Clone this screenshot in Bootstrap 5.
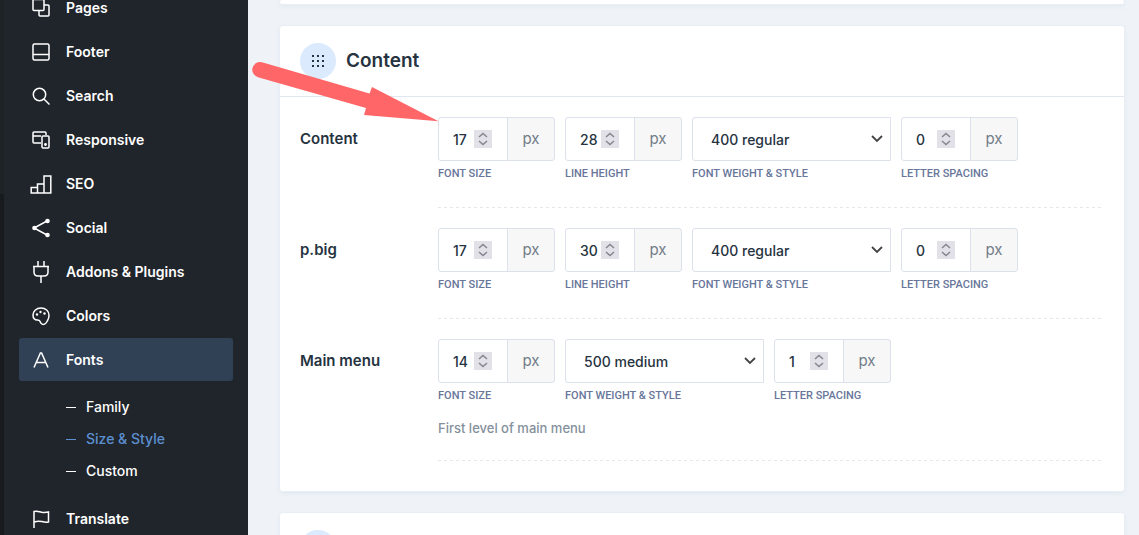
<!DOCTYPE html>
<html lang="en">
<head>
<meta charset="utf-8">
<meta name="viewport" content="width=device-width, initial-scale=1">
<title>Fonts – Size &amp; Style</title>
<link href="https://cdn.jsdelivr.net/npm/bootstrap@5.3.0/dist/css/bootstrap.min.css" rel="stylesheet">
<style>
  body { font-family: Inter, "Open Sans", sans-serif; font-size: 14px; font-weight: 500; line-height: 20px; color: #263340; background: #eff3f8; }
  .app-shell { height: 100vh; }
  .edge-strip { width: 4px; background: linear-gradient(#1e2326 194px, #171b1d 194px); }
  .side-panel { width: 244px; background: #20252b; }
  .side-menu { margin: -14px 15px 0; }
  .side-link { height: 44px; gap: 13px; padding-left: 10px; border-radius: 3px; color: #fff; font-weight: 600; text-decoration: none; }
  .side-link svg { width: 24px; height: 24px; fill: none; stroke: #fff; stroke-width: 1.5; }
  .side-link.current { background: #304156; height: 43px; }
  .sub-menu { padding: 10px 0 10px 47px; }
  .sub-link { height: 32px; gap: 10px; color: #fff; text-decoration: none; }
  .sub-link::before { content: ""; width: 10px; border-top: 1px solid; }
  .sub-link.current { color: #5c90d2; }
  .content-area { padding: 0 15px 0 32px; gap: 22px; min-width: 0; }
  .panel { flex: none; background: #fff; border-radius: 3px; box-shadow: 0 0 0 1px #e9eef5, 0 2px 5px #dfe5ee; }
  .panel-tail { height: 4px; }
  .panel-head { padding: 17px 20px; gap: 10px; border-bottom: 1px solid #e1e7f1; }
  .panel-head h2 { font-size: 19px; line-height: 24px; font-weight: 600; }
  .head-icon { width: 36px; height: 36px; background: #dbeafd; }
  .panel-body { padding: 0 20px 30px; }
  .setting { padding-top: 20px; }
  .setting-name { width: 138px; flex: none; padding-top: 12px; font-size: 15px; font-weight: 600; }
  .setting-fields { padding-bottom: 26px; background: repeating-linear-gradient(90deg, #e4e7ec 0 3px, transparent 3px 6px) bottom / 100% 1px no-repeat; }
  .field-list { gap: 10px; }
  .size-field { width: 117px; }
  .style-field { width: 199px; }
  .form-control, .form-select, .input-group-text { height: 44px; border-color: #dce1eb; border-radius: 3px; font-size: 14px; font-weight: 500; }
  .form-control, .form-select { color: #263340; }
  .form-control { padding: 0 15px 0 14px; }
  .input-group-text { width: 48px; justify-content: center; padding: 0; color: #717c87; background: #f7f7f7; font-size: 15px; font-weight: 400; }
  .form-select { padding: 0 30px 0 18px; border-radius: 3px 0 0 3px; background-size: 12px 8px; background-position: right 7px center;
    background-image: url("data:image/svg+xml,%3Csvg xmlns='http://www.w3.org/2000/svg' viewBox='0 0 12 8'%3E%3Cpath d='M1 1l5 5 5-5' fill='none' stroke='%23444' stroke-width='1.8'/%3E%3C/svg%3E"); }
  .form-control::-webkit-inner-spin-button { -webkit-appearance: none; width: 18px; height: 18px; opacity: 1; margin: 0;
    background: #e3e1e8 url("data:image/svg+xml,%3Csvg xmlns='http://www.w3.org/2000/svg' viewBox='0 0 18 18'%3E%3Cpath d='M5 7l4-3.6L13 7M5 11l4 3.6 4-3.6' fill='none' stroke='%23878590' stroke-width='1.5'/%3E%3C/svg%3E"); }
  .field-label { display: block; margin-top: 5px; font-family: Roboto, sans-serif; font-size: 11px; line-height: 16px; color: #68769a; text-transform: uppercase; white-space: nowrap; }
  .setting-note { margin: 14px 0 -3px; font-size: 13px; color: #84909c; }
  .pointer-arrow { position: absolute; left: 252px; top: 60px; width: 188px; height: 64px; pointer-events: none; }
</style>
</head>
<body>
<div class="app-shell d-flex position-relative overflow-hidden">
  <div class="edge-strip flex-shrink-0"></div>
  <aside class="side-panel flex-shrink-0">
    <nav class="side-menu d-flex flex-column">
      <a href="#" class="side-link d-flex align-items-center"><svg viewBox="0 0 24 24"><rect x="4" y="3.500" width="11" height="11" rx="1"/><path d="M15 9h4q1 0 1 1v9q0 1-1 1h-8q-1 0-1-1v-4.500"/></svg>Pages</a>
      <a href="#" class="side-link d-flex align-items-center"><svg viewBox="0 0 24 24"><rect x="4" y="4" width="16" height="16" rx="1.500"/><path d="M4 14.500h16"/></svg>Footer</a>
      <a href="#" class="side-link d-flex align-items-center"><svg viewBox="0 0 24 24"><circle cx="10.500" cy="10.500" r="6.200"/><path d="M15 15l5.500 5.500"/></svg>Search</a>
      <a href="#" class="side-link d-flex align-items-center"><svg viewBox="0 0 24 24"><path d="M17 7V5q0-1-1-1H5Q4 4 4 5v9q0 1 1 1h7M4 8h8"/><rect x="13" y="8" width="7" height="12" rx="1"/><circle cx="16.500" cy="16.500" r=".7" fill="#fff"/></svg>Responsive</a>
      <a href="#" class="side-link d-flex align-items-center"><svg viewBox="0 0 24 24"><path d="M2.200 15.500h6.300V21H2.200zM8.500 12H15v9H8.500zM15 4h6.800v17H15z"/></svg>SEO</a>
      <a href="#" class="side-link d-flex align-items-center"><svg viewBox="0 0 24 24"><path d="M18 5L5 12l13 7"/><g fill="#fff" stroke="none"><circle cx="18.500" cy="5" r="2.300"/><circle cx="5.500" cy="12" r="2.300"/><circle cx="18.500" cy="19" r="2.300"/></g></svg>Social</a>
      <a href="#" class="side-link d-flex align-items-center"><svg viewBox="0 0 24 24"><path d="M9 1v6M15 1v6M4 6.500h16M5 6.500V12q0 4 4 4h6q4 0 4-4V6.500M12 16v7"/></svg>Addons &amp; Plugins</a>
      <a href="#" class="side-link d-flex align-items-center"><svg viewBox="0 0 24 24"><path d="M12 4C7 4 4 7.500 4 11c0 3 1.500 5 4.500 5 3 0 2 1.500 3.500 3.300 2.500 2.500 5 .2 6-1.800 1-2 2-3 2-6 0-4.500-3.500-7.500-8-7.500z"/><g fill="#fff" stroke="none"><circle cx="8" cy="10.500" r="1.200"/><circle cx="11.500" cy="8" r="1.200"/><circle cx="15.500" cy="9.500" r="1.200"/></g></svg>Colors</a>
      <a href="#" class="side-link current d-flex align-items-center" aria-current="true"><svg viewBox="0 0 24 24"><path d="M5 19.500L11.400 5h1.200L19 19.500M7.500 14.500h9"/></svg>Fonts</a>
      <div class="sub-menu d-flex flex-column">
        <a href="#" class="sub-link d-flex align-items-center">Family</a>
        <a href="#" class="sub-link current d-flex align-items-center" aria-current="page">Size &amp; Style</a>
        <a href="#" class="sub-link d-flex align-items-center">Custom</a>
      </div>
      <a href="#" class="side-link d-flex align-items-center"><svg viewBox="0 0 24 24"><path d="M5 21V4.500c3-1 5 .2 7.500.7S17 5.500 19.500 5v10c-3 .6-5 0-7-.5s-4.500-.5-7.500.5"/></svg>Translate</a>
    </nav>
  </aside>

  <main class="content-area d-flex flex-column flex-grow-1">
    <section class="panel panel-tail"></section>

    <section class="panel">
      <header class="panel-head d-flex align-items-center">
        <span class="head-icon rounded-circle d-flex align-items-center justify-content-center"><svg width="14" height="14" viewBox="0 0 14 14" fill="#263340"><path d="M1 1h2v2H1zM6 1h2v2H6zM11 1h2v2h-2zM1 6h2v2H1zM6 6h2v2H6zM11 6h2v2h-2zM1 11h2v2H1zM6 11h2v2H6zM11 11h2v2h-2z"/></svg></span>
        <h2 class="m-0">Content</h2>
      </header>
      <div class="panel-body">
        <div class="setting d-flex">
          <div class="setting-name">Content</div>
          <div class="setting-fields flex-grow-1">
            <div class="field-list d-flex">
              <div class="size-field"><div class="input-group flex-nowrap"><input type="number" class="form-control" id="c-size" value="17"><span class="input-group-text">px</span></div><label class="field-label" for="c-size">Font size</label></div>
              <div class="size-field"><div class="input-group flex-nowrap"><input type="number" class="form-control" id="c-line" value="28"><span class="input-group-text">px</span></div><label class="field-label" for="c-line">Line height</label></div>
              <div class="style-field"><select class="form-select" id="c-style"><option>400 regular</option><option>500 medium</option></select><label class="field-label" for="c-style">Font weight &amp; style</label></div>
              <div class="size-field"><div class="input-group flex-nowrap"><input type="number" class="form-control" id="c-space" value="0"><span class="input-group-text">px</span></div><label class="field-label" for="c-space">Letter spacing</label></div>
            </div>
          </div>
        </div>
        <div class="setting d-flex">
          <div class="setting-name">p.big</div>
          <div class="setting-fields flex-grow-1">
            <div class="field-list d-flex">
              <div class="size-field"><div class="input-group flex-nowrap"><input type="number" class="form-control" id="b-size" value="17"><span class="input-group-text">px</span></div><label class="field-label" for="b-size">Font size</label></div>
              <div class="size-field"><div class="input-group flex-nowrap"><input type="number" class="form-control" id="b-line" value="30"><span class="input-group-text">px</span></div><label class="field-label" for="b-line">Line height</label></div>
              <div class="style-field"><select class="form-select" id="b-style"><option>400 regular</option><option>500 medium</option></select><label class="field-label" for="b-style">Font weight &amp; style</label></div>
              <div class="size-field"><div class="input-group flex-nowrap"><input type="number" class="form-control" id="b-space" value="0"><span class="input-group-text">px</span></div><label class="field-label" for="b-space">Letter spacing</label></div>
            </div>
          </div>
        </div>
        <div class="setting d-flex">
          <div class="setting-name">Main menu</div>
          <div class="setting-fields flex-grow-1">
            <div class="field-list d-flex">
              <div class="size-field"><div class="input-group flex-nowrap"><input type="number" class="form-control" id="m-size" value="14"><span class="input-group-text">px</span></div><label class="field-label" for="m-size">Font size</label></div>
              <div class="style-field"><select class="form-select" id="m-style"><option>500 medium</option><option>400 regular</option></select><label class="field-label" for="m-style">Font weight &amp; style</label></div>
              <div class="size-field"><div class="input-group flex-nowrap"><input type="number" class="form-control" id="m-space" value="1"><span class="input-group-text">px</span></div><label class="field-label" for="m-space">Letter spacing</label></div>
            </div>
            <p class="setting-note">First level of main menu</p>
          </div>
        </div>
      </div>
    </section>

    <section class="panel">
      <header class="panel-head d-flex align-items-center"><span class="head-icon rounded-circle"></span></header>
    </section>
  </main>

  <svg class="pointer-arrow" viewBox="252 60 188 64" aria-hidden="true"><path d="M262 62.300L369.500 93.500 372 87 438.500 121.300 364 115 366 108 258 77.200A7.500 7.500 0 0 1 262 62.300z" fill="#ff6668"/></svg>
</div>
<script src="https://cdn.jsdelivr.net/npm/bootstrap@5.3.0/dist/js/bootstrap.bundle.min.js"></script>
</body>
</html>
